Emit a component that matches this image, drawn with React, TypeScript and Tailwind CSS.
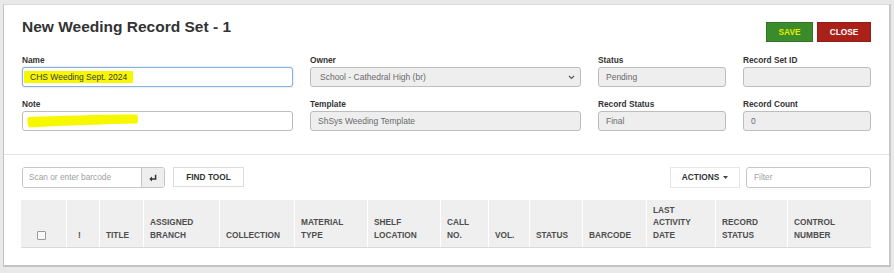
import React from "react";

const cols: { lines: string[]; cb?: boolean; pl: string }[] = [
  { lines: [], cb: true, pl: "pl-[16px]" },
  { lines: ["!"], pl: "pl-[11px]" },
  { lines: ["TITLE"], pl: "pl-[6px]" },
  { lines: ["ASSIGNED", "BRANCH"], pl: "pl-[6px]" },
  { lines: ["COLLECTION"], pl: "pl-[6px]" },
  { lines: ["MATERIAL", "TYPE"], pl: "pl-[6px]" },
  { lines: ["SHELF", "LOCATION"], pl: "pl-[6px]" },
  { lines: ["CALL", "NO."], pl: "pl-[6px]" },
  { lines: ["VOL."], pl: "pl-[6px]" },
  { lines: ["STATUS"], pl: "pl-[6px]" },
  { lines: ["BARCODE"], pl: "pl-[6px]" },
  { lines: ["LAST", "ACTIVITY", "DATE"], pl: "pl-[6px]" },
  { lines: ["RECORD", "STATUS"], pl: "pl-[6px]" },
  { lines: ["CONTROL", "NUMBER"], pl: "pl-[6px]" },
];

function Label({ children }: { children: React.ReactNode }) {
  return (
    <div className="text-[8.3px] leading-[10px] font-bold text-[#333] mb-[2px]">
      {children}
    </div>
  );
}

function ReadOnly({ value }: { value: string }) {
  return (
    <div className="h-[20px] rounded-[3px] border border-[#bdbdbd] bg-[#eeeeee] flex items-center pl-[7px] text-[8.5px] text-[#6a6a6a]">
      {value}
    </div>
  );
}

export default function App() {
  return (
    <div className="w-[894px] h-[273px] bg-[#e9e9e9] pt-[4px] pl-[3px] font-['Liberation_Sans',Arial,sans-serif]">
      <div className="w-[888px] h-[263px] bg-white border-l border-t border-r-2 border-b-2 border-l-[#c4c4c4] border-t-[#d9d9d9] border-r-[#c8c8c8] border-b-[#c4c4c4]">
        <div className="px-[18px] pt-[13px]">
          <div className="flex justify-between items-start">
            <h1 className="text-[15.5px] leading-[18px] font-bold text-[#333]">
              New Weeding Record Set - 1
            </h1>
            <div className="flex gap-[4px] mt-[4px]">
              <button className="w-[47px] h-[20px] bg-[#3b8a2c] border border-[#2f7623] text-[#e2ee00] text-[8.3px] font-bold">
                SAVE
              </button>
              <button className="w-[54px] h-[20px] bg-[#a8221a] border border-[#921b13] text-white text-[8.3px] font-bold">
                CLOSE
              </button>
            </div>
          </div>

          <div className="mt-[13px] grid grid-cols-[271px_271px_128px_1fr] gap-x-[17px] gap-y-[12px]">
            <div>
              <Label>Name</Label>
              <div className="h-[20px] rounded-[3px] border border-[#8eb0dc] shadow-[0_0_2px_#a9c4e8] bg-white flex items-center pl-[1px] text-[8.5px] text-[#3a3a3a]">
                <span className="bg-[#f7f700] px-[6px] leading-[12px]">CHS Weeding Sept. 2024</span>
              </div>
            </div>
            <div>
              <Label>Owner</Label>
              <div className="h-[20px] rounded-[3px] border border-[#bdbdbd] bg-[#eeeeee] flex items-center justify-between pl-[9px] pr-[5px] text-[8.5px] text-[#6a6a6a]">
                <span>School - Cathedral High (br)</span>
                <svg width="7" height="5" viewBox="0 0 7 5">
                  <path d="M1 1 L3.5 3.5 L6 1" fill="none" stroke="#555" strokeWidth="1.1" />
                </svg>
              </div>
            </div>
            <div>
              <Label>Status</Label>
              <ReadOnly value="Pending" />
            </div>
            <div>
              <Label>Record Set ID</Label>
              <ReadOnly value="" />
            </div>
            <div>
              <Label>Note</Label>
              <div className="h-[20px] rounded-[3px] border border-[#bdbdbd] bg-white flex items-center pl-[4px]">
                <svg width="112" height="14" viewBox="0 0 112 14">
                  <path
                    d="M1 3 C30 2 70 0.5 110 0.5 C111.5 3 111.5 7 110 9.5 C80 10 40 11.5 2 13.5 C0 10 0 6 1 3 Z"
                    fill="#f7f700"
                  />
                </svg>
              </div>
            </div>
            <div>
              <Label>Template</Label>
              <ReadOnly value="ShSys Weeding Template" />
            </div>
            <div>
              <Label>Record Status</Label>
              <ReadOnly value="Final" />
            </div>
            <div>
              <Label>Record Count</Label>
              <ReadOnly value="0" />
            </div>
          </div>
        </div>

        <div className="mt-[23px] border-t border-[#e3e3e3]" />

        <div className="mt-[12px] px-[18px] flex items-start">
          <div className="flex h-[21px] w-[143px] rounded-[3px] border border-[#c6c6c6] overflow-hidden">
            <div className="flex-1 flex items-center pl-[6px] text-[8.3px] text-[#a0a0a0] bg-white">
              Scan or enter barcode
            </div>
            <div className="w-[23px] border-l border-[#c6c6c6] bg-[#eeeeee] flex items-center justify-center">
              <svg width="8" height="8" viewBox="0 0 8 8">
                <path d="M6.6 0.8 V5 H2.5" fill="none" stroke="#333" strokeWidth="1.5" />
                <path d="M0.3 5 L3 2.6 L3 7.4 Z" fill="#333" />
              </svg>
            </div>
          </div>
          <button className="ml-[8px] w-[71px] h-[20px] border border-[#dcdcdc] bg-white text-[8.3px] font-bold text-[#333]">
            FIND TOOL
          </button>
          <div className="flex-1" />
          <button className="w-[70px] h-[21px] border border-[#e6e6e6] bg-white text-[8.3px] font-bold text-[#333] flex items-center justify-center gap-[4px]">
            ACTIONS
            <svg width="5" height="3" viewBox="0 0 5 3">
              <path d="M0 0 H5 L2.5 3 Z" fill="#444" />
            </svg>
          </button>
          <div className="ml-[6px] w-[125px] h-[21px] rounded-[3px] border border-[#c6c6c6] flex items-center pl-[7px] text-[8.3px] text-[#a0a0a0]">
            Filter
          </div>
        </div>

        <div className="mt-[12px] ml-[17px] w-[850px] grid grid-cols-[45px_33px_44px_76px_75px_73px_73px_48px_41px_53px_64px_69px_72px_84px] bg-[#efefef] border-b border-[#dadada]">
          {cols.map((c, i) => (
            <div
              key={i}
              className={`flex flex-col justify-end pt-[4px] pb-[6px] ${c.pl} ${i > 0 ? "border-l border-white" : ""} text-[8.3px] leading-[12.4px] font-bold text-[#4d4d4d] whitespace-nowrap`}
            >
              {c.cb ? (
                <div className="h-[12.4px] flex items-center">
                  <div className="w-[9px] h-[9px] border border-[#9a9a9a] rounded-[1px] bg-[#f8f8f8]" />
                </div>
              ) : (
                c.lines.map((l) => <div key={l}>{l}</div>)
              )}
            </div>
          ))}
        </div>
      </div>
    </div>
  );
}
